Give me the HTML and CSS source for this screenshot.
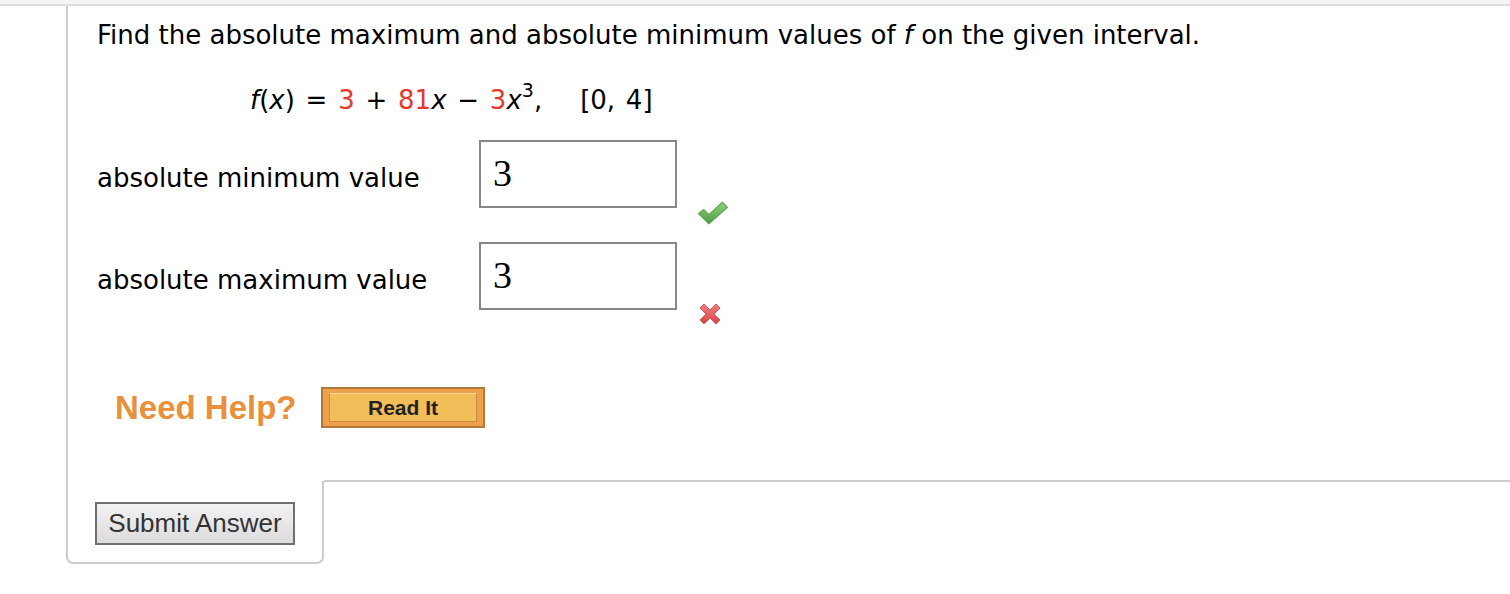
FILE: index.html
```html
<!DOCTYPE html>
<html>
<head>
<meta charset="utf-8">
<link rel="stylesheet" href="styles.css">
</head>
<body>
<div class="topstrip"></div>
<div class="panel">
  <div class="qbody">
    <p class="prompt">Find the absolute maximum and absolute minimum values of <i>f</i> on the given interval.</p>
    <p class="equation"><i>f</i>(<i>x</i>) = <span class="red">3</span> + <span class="red">81</span><i>x</i> − <span class="red">3</span><i>x</i><sup>3</sup>,<span class="gap"></span>[0, 4]</p>
    <div class="row">
      <span class="label">absolute minimum value</span>
      <div class="answer">3</div>
      <svg class="mark" width="34" height="27" viewBox="0 0 32 26">
        <defs>
          <linearGradient id="gg" x1="0" y1="0" x2="0" y2="1">
            <stop offset="0" stop-color="#8fd07a"/>
            <stop offset="1" stop-color="#4f9c45"/>
          </linearGradient>
        </defs>
        <path d="M2 14 L7 10 L12 15 L25 3 L30 8 L12 24 Z" fill="url(#gg)" stroke="#5ca54f" stroke-width="1" stroke-linejoin="round"/>
      </svg>
    </div>
    <div class="row">
      <span class="label">absolute maximum value</span>
      <div class="answer">3</div>
      <svg class="mark cross" width="26" height="26" viewBox="0 0 26 26">
        <defs>
          <linearGradient id="rg" x1="0" y1="0" x2="0" y2="1">
            <stop offset="0" stop-color="#f08080"/>
            <stop offset="1" stop-color="#d84444"/>
          </linearGradient>
        </defs>
        <path d="M3 7 L7 3 L13 9 L19 3 L23 7 L17 13 L23 19 L19 23 L13 17 L7 23 L3 19 L9 13 Z" fill="url(#rg)" stroke="#d95555" stroke-width="1" stroke-linejoin="round"/>
      </svg>
    </div>
    <div class="help">
      <span class="needhelp">Need Help?</span>
      <span class="readit"><span class="readit-inner">Read It</span></span>
    </div>
  </div>
  <div class="footer">
    <div class="tab"><button class="submit">Submit Answer</button></div>
    <div class="rest"></div>
  </div>
</div>
</body>
</html>
```

FILE: styles.css
```css
html, body {
  margin: 0;
  padding: 0;
  background: #fff;
}
.topstrip {
  height: 4px;
  background: #f5f5f5;
  border-bottom: 2px solid #dcdcdc;
}
.panel {
  margin-left: 66px;
}
.qbody {
  border-left: 2px solid #cccccc;
  height: 475px;
  box-sizing: border-box;
  padding: 14px 0 0 29px;
  font-family: "DejaVu Sans", Verdana, sans-serif;
  font-size: 26px;
  color: #000;
}
.prompt {
  margin: 0;
  line-height: 30px;
}
.equation {
  margin: 35px 0 0 153px;
  line-height: 30px;
  word-spacing: 2.5px;
}
.equation sup {
  font-size: 19px;
  line-height: 0;
  vertical-align: 12px;
}
.gap {
  display: inline-block;
  width: 38px;
}
.red {
  color: #e5392c;
}
.row {
  display: flex;
  align-items: flex-start;
  margin-top: 25px;
  height: 68px;
}
.row + .row {
  margin-top: 34px;
}
.label {
  width: 382px;
  margin-top: 24px;
  line-height: 28px;
}
.answer {
  width: 198px;
  height: 68px;
  box-sizing: border-box;
  border: 2px solid #878787;
  font-family: "Liberation Serif", "Times New Roman", serif;
  font-size: 38px;
  line-height: 62px;
  padding-left: 12px;
}
.mark {
  margin: 59px 0 0 19px;
}
.mark.cross {
  margin: 59px 0 0 20px;
}
.help {
  display: flex;
  align-items: center;
  margin: 77px 0 0 18px;
  height: 41px;
}
.needhelp {
  font-family: "Liberation Sans", Arial, sans-serif;
  font-weight: bold;
  font-size: 33px;
  color: #e8913a;
  width: 206px;
}
.readit {
  display: flex;
  width: 164px;
  height: 41px;
  box-sizing: border-box;
  border: 2px solid #b07a3a;
  background: #eea04a;
  padding: 4px 6px;
}
.readit-inner {
  flex: 1;
  display: flex;
  align-items: center;
  justify-content: center;
  border: 1px solid #c88a44;
  border-top-color: #f8d8a0;
  background: #f2be5a;
  font-family: "Liberation Sans", Arial, sans-serif;
  font-weight: bold;
  font-size: 21px;
  color: #222;
}
.footer {
  display: flex;
}
.tab {
  width: 258px;
  height: 83px;
  box-sizing: border-box;
  border: 2px solid #cccccc;
  border-top: none;
  border-radius: 0 0 7px 7px;
  padding: 21px 0 0 27px;
}
.rest {
  flex: 1;
  border-top: 2px solid #cccccc;
  margin-top: -1px;
}
.submit {
  width: 200px;
  height: 43px;
  border: 2px solid #707070;
  background: linear-gradient(#f2f2f2, #dcdcdc);
  font-family: "Liberation Sans", Arial, sans-serif;
  font-size: 26px;
  color: #333;
  padding: 0;
  border-radius: 0;
}
```
